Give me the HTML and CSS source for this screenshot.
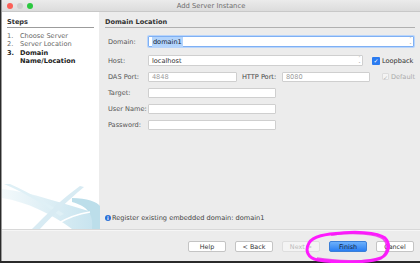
FILE: index.html
```html
<!DOCTYPE html>
<html lang="en">
<head>
    <meta charset="UTF-8">
    <title>Add Server Instance</title>
    <link rel="stylesheet" href="styles.css">
</head>
<body>
    <div class="window">
        <div class="titlebar">
            <span class="light red"></span>
            <span class="light gray"></span>
            <span class="light green"></span>
            <span class="title">Add Server Instance</span>
        </div>

        <div class="main">
            <div class="steps">
                <div class="steps-title">Steps</div>
                <ol class="step-list">
                    <li><span class="num">1.</span><span>Choose Server</span></li>
                    <li><span class="num">2.</span><span>Server Location</span></li>
                    <li class="current"><span class="num">3.</span><span>Domain<br>Name/Location</span></li>
                </ol>
                <svg class="swoosh" width="98" height="45" viewBox="0 0 98 45">
                    <defs>
                        <linearGradient id="sw" x1="0" y1="0" x2="1" y2="0">
                            <stop offset="0" stop-color="#f3f9fb"/>
                            <stop offset="1" stop-color="#c4e2ee"/>
                        </linearGradient>
                    </defs>
                    <path d="M0 5 C30 8 60 20 98 30 L98 45 L70 45 C50 30 25 18 0 14 Z" fill="url(#sw)"/>
                    <path d="M2 0 L8 0 C30 10 50 22 62 30 L58 32 C45 22 25 10 2 0 Z" fill="#dff0f6"/>
                    <path d="M30 45 C45 30 60 15 78 2 L82 3 C65 17 50 32 38 45 Z" fill="#d8ebf3"/>
                    <path d="M70 14 C85 14 95 18 98 22 L98 45 L90 45 C92 30 85 22 70 18 Z" fill="#bcdeea"/>
                    <path d="M55 40 C65 34 75 30 88 28" stroke="#ffffff" stroke-width="1.5" fill="none"/>
                </svg>
            </div>

            <div class="content">
                <div class="section-title">Domain Location</div>

                <div class="form">
                    <div class="row row-first">
                        <label class="label">Domain:</label>
                        <div class="field focus wide">
                            <span class="selected">domain1</span>
                            <span class="stepper">&#8963;<br>&#8964;</span>
                        </div>
                    </div>
                    <div class="row">
                        <label class="label">Host:</label>
                        <div class="field host">
                            localhost
                            <span class="stepper">&#8963;<br>&#8964;</span>
                        </div>
                        <span class="check on">&#10003;</span>
                        <span class="check-label">Loopback</span>
                    </div>
                    <div class="row">
                        <label class="label">DAS Port:</label>
                        <div class="field port muted">4848</div>
                        <label class="label-inline">HTTP Port:</label>
                        <div class="field port2 muted">8080</div>
                        <span class="check disabled">&#10003;</span>
                        <span class="check-label dim">Default</span>
                    </div>
                    <div class="row">
                        <label class="label">Target:</label>
                        <div class="field short"></div>
                    </div>
                    <div class="row">
                        <label class="label">User Name:</label>
                        <div class="field short"></div>
                    </div>
                    <div class="row">
                        <label class="label">Password:</label>
                        <div class="field short"></div>
                    </div>
                </div>

                <div class="info">
                    <span class="info-icon">i</span>Register existing embedded domain: domain1
                </div>
            </div>
        </div>

        <div class="buttons">
            <button class="btn">Help</button>
            <button class="btn">&lt; Back</button>
            <button class="btn" disabled>Next &gt;</button>
            <button class="btn primary">Finish</button>
            <button class="btn">Cancel</button>
        </div>
    </div>

    <!-- hand-drawn highlight around Finish -->
    <svg class="scribble" width="90" height="34" viewBox="0 0 90 34">
        <path d="M30 4 C50 1 75 2 82 8 C88 14 86 24 78 28 C65 33 35 33 15 30 C4 28 2 20 6 13 C10 6 22 4 40 3"
              fill="none" stroke="#ff1aff" stroke-width="3" stroke-linecap="round"/>
        <path d="M28 5 C52 2 74 4 80 9 C86 15 84 25 76 29 C60 32 32 31 14 28"
              fill="none" stroke="#f020f0" stroke-width="1.5" opacity="0.8"/>
    </svg>
</body>
</html>
```

FILE: styles.css
```css
body {
    margin: 0;
    width: 420px;
    height: 263px;
    overflow: hidden;
    background: #2a2a2a;
    font-family: "DejaVu Sans", "Noto Sans", sans-serif;
    font-size: 6.6px;
    color: #333;
    position: relative;
}
.window {
    height: 261px;
    margin-left: 1px;
    border-left: 1px solid #9a9a9a;
    background: #ececec;
    display: flex;
    flex-direction: column;
}
.titlebar {
    height: 12px;
    background: linear-gradient(#ebebeb, #dcdcdc);
    border-bottom: 1px solid #c8c8c8;
    display: flex;
    align-items: center;
    padding-left: 5px;
    gap: 4px;
    position: relative;
    box-sizing: border-box;
}
.light {
    width: 6px;
    height: 6px;
    border-radius: 50%;
}
.light.red { background: #fc5f57; }
.light.gray { background: #cfcfcf; }
.light.green { background: #2bc840; }
.title {
    position: absolute;
    left: 0;
    right: 0;
    text-align: center;
    color: #6e6e6e;
    font-size: 6.8px;
}
.main {
    display: flex;
    height: 217px;
    border-bottom: 1px solid #d8d8d8;
}
.steps {
    width: 98px;
    background: #fff;
    position: relative;
    padding: 6px 5px 0 5px;
    box-sizing: border-box;
}
.steps-title {
    font-weight: bold;
    color: #333;
    padding-bottom: 1px;
    border-bottom: 1px solid #9c9c9c;
}
.step-list {
    list-style: none;
    margin: 4px 0 0 0;
    padding: 0;
    color: #666;
    line-height: 8.4px;
}
.step-list li {
    display: flex;
}
.step-list .num {
    width: 13px;
    flex-shrink: 0;
}
.step-list .current {
    font-weight: bold;
    color: #222;
}
.swoosh {
    position: absolute;
    left: 0;
    bottom: 0;
}
.content {
    flex: 1;
    padding: 6px 5px 0 6px;
    display: flex;
    flex-direction: column;
}
.section-title {
    font-weight: bold;
    color: #333;
    padding-bottom: 1px;
    border-bottom: 1px solid #b0b0b0;
}
.form {
    padding-left: 3px;
    margin-top: 8px;
}
.row {
    display: flex;
    align-items: center;
    height: 11px;
    margin-bottom: 5px;
}
.row-first {
    margin-bottom: 8px;
}
.label {
    width: 40px;
    color: #555;
}
.label-inline {
    width: 40px;
    margin-left: 5px;
    color: #444;
}
.field {
    height: 10px;
    background: #fff;
    border: 1px solid #cfcfcf;
    border-radius: 1px;
    box-sizing: border-box;
    padding-left: 3px;
    display: flex;
    align-items: center;
    position: relative;
    color: #333;
    line-height: 10px;
}
.field.focus {
    height: 11px;
    border-color: #7fb0f4;
    box-shadow: 0 0 0 1px #b9d5fb;
}
.field.wide { width: 266px; }
.field.host { width: 215px; height: 11px; }
.field.port { width: 89px; }
.field.port2 { width: 88px; }
.field.short { width: 128px; }
.muted { color: #9a9a9a; }
.selected {
    background: #b3d4fc;
    color: #123;
    padding: 0 1px;
}
.stepper {
    position: absolute;
    right: 1px;
    top: 0;
    font-size: 3.5px;
    line-height: 3.5px;
    color: #666;
    padding-top: 1px;
}
.check {
    width: 8px;
    height: 8px;
    border-radius: 1px;
    box-sizing: border-box;
    font-size: 6px;
    line-height: 8px;
    text-align: center;
    margin-left: 9px;
    margin-right: 2px;
}
.check.on {
    background: #2b7bf0;
    color: #fff;
}
.check.disabled {
    width: 7px;
    height: 7px;
    line-height: 7px;
    border: 1px solid #dcdcdc;
    background: #f4f4f4;
    color: #b8b8b8;
    margin-left: 12px;
}
.check-label { color: #333; }
.check-label.dim { color: #aaa; }
.info {
    margin-top: auto;
    margin-bottom: 7px;
    color: #444;
    display: flex;
    align-items: center;
}
.info-icon {
    width: 6px;
    height: 6px;
    border-radius: 50%;
    background: #2a6fd6;
    color: #fff;
    font-size: 5px;
    font-weight: bold;
    line-height: 6px;
    text-align: center;
    margin-right: 1px;
}
.buttons {
    height: 30px;
    display: flex;
    justify-content: flex-end;
    align-items: center;
    gap: 9px;
    padding: 2px 6px 0 0;
    box-sizing: border-box;
    border-top: 1px solid #f6f6f6;
}
.btn {
    width: 38px;
    height: 11px;
    padding: 0;
    font-family: inherit;
    font-size: 6.4px;
    color: #333;
    background: #fff;
    border: 1px solid #c4c4c4;
    border-radius: 2px;
}
.btn[disabled] {
    color: #bbb;
    background: #f4f4f4;
    border-color: #dedede;
}
.btn.primary {
    background: linear-gradient(#6cb0fb, #2a7ff2);
    border-color: #3b7fd8;
    color: #102040;
}
.scribble {
    position: absolute;
    left: 303px;
    top: 230px;
}
```
